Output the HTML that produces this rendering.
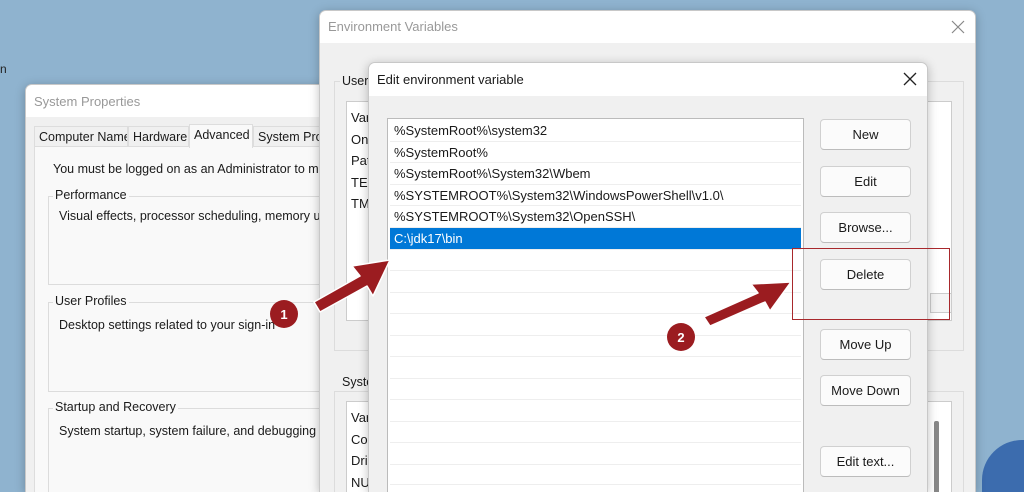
<!DOCTYPE html>
<html style="overflow:hidden;width:1024px;height:492px"><head><style>
*{margin:0;padding:0;box-sizing:border-box}
body{width:1024px;height:492px;overflow:hidden;background:#8fb3cf;font-family:"Liberation Sans",sans-serif;font-size:13px;color:#1a1a1a;position:relative}
.a{position:absolute;white-space:nowrap}
.win{position:absolute;background:#f0f0f0;border:1px solid #c8c8c8;border-bottom:none;border-radius:7px 7px 0 0;box-shadow:0 2px 10px rgba(0,0,0,.25);overflow:hidden}
.tb{position:absolute;left:0;right:0;top:0;background:#fff}
.btn{position:absolute;left:820px;width:91px;height:31px;background:#fbfbfb;border:1px solid #d0d0d0;border-bottom-color:#bcbcbc;border-radius:4px;text-align:center;line-height:29px;font-size:13px}
.gb{position:absolute;border:1px solid #dcdcdc}
.gl{position:absolute;background:#f0f0f0;padding:0 2px;font-size:12.5px;white-space:nowrap}
.row{position:absolute;left:2px;right:2px;height:21.5px;border-bottom:1px solid #eee;padding-left:4px;line-height:21px;font-size:13px;white-space:nowrap}
.tab{position:absolute;height:21px;border:1px solid #ddd;background:#f0f0f0;padding:3px 4px;font-size:12.5px;white-space:nowrap;overflow:hidden}
</style></head><body>
<div class="a" style="left:0;top:62px;font-size:12px;color:#222">n</div>
<div class="a" style="left:982px;top:440px;width:42px;height:52px;background:#2e5fa8;border-radius:40px 0 0 0;opacity:.85"></div>

<!-- System Properties -->
<div class="win" style="left:25px;top:84px;width:320px;height:408px">
 <div class="tb" style="height:32px"><span class="a" style="left:8px;top:9px;color:#999;font-size:13px">System Properties</span></div>
 <div class="a" style="left:8px;top:61px;width:310px;height:347px;background:#f9f9f9;border:1px solid #ddd;border-bottom:none"></div>
 <div class="tab" style="left:8px;top:41px;width:94px">Computer Name</div>
 <div class="tab" style="left:102px;top:41px;width:61px">Hardware</div>
 <div class="tab" style="left:163px;top:39px;height:24px;width:64px;border-bottom:none;background:#f9f9f9">Advanced</div>
 <div class="tab" style="left:227px;top:41px;width:92px">System Prot</div>
 <div class="a" style="left:27px;top:77px;font-size:12.5px;width:290px;overflow:hidden">You must be logged on as an Administrator to make</div>
 <div class="gb" style="left:22px;top:111px;width:296px;height:89px;border-right:none"></div><div class="gl" style="left:27px;top:103px;background:#f9f9f9">Performance</div>
 <div class="a" style="left:33px;top:124px;font-size:12.5px;width:285px;overflow:hidden">Visual effects, processor scheduling, memory usag</div>
 <div class="gb" style="left:22px;top:217px;width:296px;height:90px;border-right:none"></div><div class="gl" style="left:27px;top:209px;background:#f9f9f9">User Profiles</div>
 <div class="a" style="left:33px;top:233px;font-size:12.5px">Desktop settings related to your sign-in</div>
 <div class="gb" style="left:22px;top:323px;width:296px;height:85px;border-right:none;border-bottom:none"></div><div class="gl" style="left:27px;top:315px;background:#f9f9f9">Startup and Recovery</div>
 <div class="a" style="left:33px;top:339px;font-size:12.5px;width:285px;overflow:hidden">System startup, system failure, and debugging info</div>
</div>

<!-- Environment Variables -->
<div class="win" style="left:319px;top:10px;width:657px;height:482px">
 <div class="tb" style="height:32px"><span class="a" style="left:8px;top:8px;color:#999;font-size:13px">Environment Variables</span>
 <svg class="a" style="left:631px;top:9px" width="14" height="14"><path d="M1 1L13 13M13 1L1 13" stroke="#888" stroke-width="1.2"/></svg></div>
 <div class="gb" style="left:14px;top:70px;width:630px;height:270px"></div><div class="gl" style="left:20px;top:63px">User</div>
 <div class="a" style="left:26px;top:90px;width:606px;height:220px;background:#fff;border:1px solid #ccc"></div>
 <div class="a" style="left:31px;top:96px;line-height:21.5px;font-size:13px">Var<br>On<br>Pat<br>TEI<br>TM</div>
 <div class="a" style="left:610px;top:282px;width:22px;height:20px;background:#f4f4f4;border:1px solid #ccc"></div>
 <div class="gb" style="left:14px;top:380px;width:630px;height:102px;border-bottom:none"></div><div class="gl" style="left:20px;top:364px">Syste</div>
 <div class="a" style="left:26px;top:390px;width:606px;height:92px;background:#fff;border:1px solid #ccc;border-bottom:none"></div>
 <div class="a" style="left:31px;top:396px;line-height:21.5px;font-size:13px">Var<br>Co<br>Dri<br>NU</div>
 <div class="a" style="left:614px;top:410px;width:5px;height:72px;background:#888;border-radius:2px 2px 0 0"></div>
</div>

<!-- Edit env var -->
<div class="win" style="left:368px;top:62px;width:560px;height:430px">
 <div class="tb" style="height:33px"><span class="a" style="left:8px;top:9px;font-size:13px">Edit environment variable</span>
 <svg class="a" style="left:534px;top:9px" width="14" height="14"><path d="M1 1L13 13M13 1L1 13" stroke="#222" stroke-width="1.3"/></svg></div>
</div>
<div class="a" style="left:387px;top:118px;width:417px;height:374px;background:#fff;border:1px solid #bbb;border-bottom:none;overflow:hidden">
 <div class="row" style="top:1px">%SystemRoot%\system32</div>
 <div class="row" style="top:22.5px">%SystemRoot%</div>
 <div class="row" style="top:44px">%SystemRoot%\System32\Wbem</div>
 <div class="row" style="top:65.5px">%SYSTEMROOT%\System32\WindowsPowerShell\v1.0\</div>
 <div class="row" style="top:87px">%SYSTEMROOT%\System32\OpenSSH\</div>
 <div class="row" style="top:109px;background:#0078d7;color:#fff">C:\jdk17\bin</div>
 <div class="row" style="top:130.5px"></div><div class="row" style="top:152px"></div><div class="row" style="top:173.5px"></div><div class="row" style="top:195px"></div><div class="row" style="top:216.5px"></div><div class="row" style="top:238px"></div><div class="row" style="top:259.5px"></div><div class="row" style="top:281px"></div><div class="row" style="top:302.5px"></div><div class="row" style="top:324px"></div><div class="row" style="top:345.5px;height:20px"></div>
</div>
<div class="btn" style="top:119px">New</div>
<div class="btn" style="top:166px">Edit</div>
<div class="btn" style="top:212px">Browse...</div>
<div class="btn" style="top:259px">Delete</div>
<div class="btn" style="top:329px">Move Up</div>
<div class="btn" style="top:375px">Move Down</div>
<div class="btn" style="top:446px">Edit text...</div>

<div class="a" style="left:792px;top:248px;width:158px;height:72px;border:1.5px solid #a8282c"></div>
<svg class="a" style="left:0;top:0;display:block" width="1024" height="492">
 <g fill="#9b1c20" stroke="#fff" stroke-width="1.5" stroke-linejoin="round">
  <path d="M314 302L360 276L352 266L390 260L373 296L367 286L320 312Z"/>
  <path d="M704 317L758 293L751 284L791 282L770 311L765 302L710 326Z"/>
 </g>
 <g fill="#9b1c20"><circle cx="284" cy="314" r="14"/><circle cx="681" cy="337" r="14"/></g>
 <text x="284" y="319" fill="#fff" font-family="Liberation Sans" font-weight="bold" font-size="13" text-anchor="middle">1</text>
 <text x="681" y="342" fill="#fff" font-family="Liberation Sans" font-weight="bold" font-size="13" text-anchor="middle">2</text>
</svg>
</body></html>
